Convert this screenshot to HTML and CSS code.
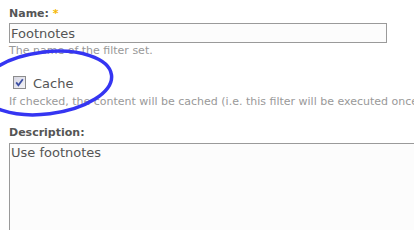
FILE: index.html
```html
<!DOCTYPE html>
<html lang="en">
<head>
  <meta charset="UTF-8">
  <title>Filter set</title>
  <link rel="stylesheet" href="styles.css">
</head>
<body>
  <div class="form">
    <div class="item">
      <label class="title" for="name">Name: <span class="req">*</span></label>
      <input class="text" type="text" id="name" value="Footnotes">
      <div class="desc">The name of the filter set.</div>
    </div>
    <div class="item check">
      <label class="option">
        <span class="box">
          <svg width="13" height="13" viewBox="0 0 13 13">
            <defs>
              <linearGradient id="bg" x1="0" y1="0" x2="1" y2="1">
                <stop offset="0" stop-color="#d6d6e2"/>
                <stop offset="1" stop-color="#f4f4f8"/>
              </linearGradient>
            </defs>
            <rect x="0.5" y="0.5" width="12" height="12" fill="url(#bg)" stroke="#8c8c8c"/>
            <path d="M3.2 6.4 L5.4 9.2 L9.8 3.2" fill="none" stroke="#3b4ea3" stroke-width="1.8"/>
          </svg>
        </span>
        Cache
      </label>
      <div class="desc">If checked, the content will be cached (i.e. this filter will be executed once</div>
    </div>
    <div class="item">
      <label class="title" for="description">Description:</label>
      <textarea class="area" id="description">Use footnotes</textarea>
    </div>
  </div>

  <!-- hand-drawn highlight around the checkbox -->
  <svg class="mark" width="414" height="230" viewBox="0 0 414 230">
    <ellipse cx="46" cy="83" rx="66" ry="31" transform="rotate(-7 46 83)" fill="none" stroke="#3535f2" stroke-width="3.5"/>
  </svg>
</body>
</html>
```

FILE: styles.css
```css
body {
  margin: 0;
  font-family: "DejaVu Sans", Verdana, sans-serif;
  background: #fff;
  overflow: hidden;
}
.form {
  padding: 7px 0 0 9px;
}
.title {
  display: block;
  font-size: 11px;
  line-height: 13px;
  font-weight: bold;
  color: #555;
}
.req {
  color: #f5b800;
}
.text {
  display: block;
  box-sizing: border-box;
  width: 378px;
  height: 20px;
  margin: 3px 0 0;
  padding: 0 1px;
  border: 1px solid #9a9a9a;
  background: #fcfcfc;
  font-family: inherit;
  font-size: 13px;
  color: #555;
  outline: none;
}
.desc {
  font-size: 11px;
  line-height: 13px;
  color: #999;
  white-space: nowrap;
  margin-top: 1px;
}
.check {
  margin-top: 19px;
}
.option {
  display: flex;
  align-items: flex-start;
  gap: 7px;
  padding-left: 4px;
  font-size: 13px;
  line-height: 16px;
  color: #555;
}
.box {
  display: block;
  width: 13px;
  height: 13px;
}
.box svg {
  display: block;
}
.check .desc {
  margin-top: 3px;
}
.item:last-child {
  margin-top: 18px;
}
.area {
  display: block;
  box-sizing: border-box;
  width: 430px;
  height: 120px;
  margin: 4px 0 0;
  padding: 1px;
  border: 1px solid #9a9a9a;
  background: #fcfcfc;
  font-family: inherit;
  font-size: 13px;
  line-height: 16px;
  color: #555;
  resize: none;
  outline: none;
}
.mark {
  position: absolute;
  top: 0;
  left: 0;
  pointer-events: none;
}
```
